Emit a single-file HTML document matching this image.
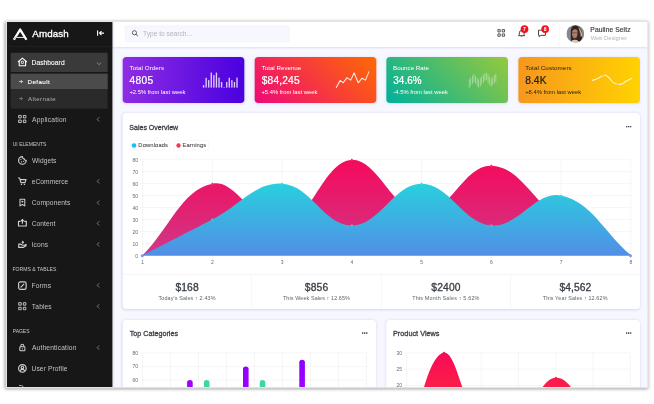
<!DOCTYPE html>
<html lang="en"><head><meta charset="utf-8"><title>Amdash - Dashboard</title>
<style>
html{font-size:3px}
html,body{margin:0;padding:0;width:654px;height:404px;overflow:hidden;background:#fff}
body{font-family:"Liberation Sans","DejaVu Sans",sans-serif}
#stage{position:absolute;left:0;top:0;width:654rem;height:404rem;transform:scale(0.333333);transform-origin:0 0}
#win{position:absolute;left:7rem;top:22rem;width:640.2rem;height:365rem;overflow:hidden;background:#f7f7ff;box-shadow:0 0 0 1.300rem #e4e4e4,-.6rem 1.200rem 3.200rem 1.300rem rgba(0,0,0,.45)}
#o{filter:blur(.5rem);position:absolute;left:-7rem;top:-22rem;width:654rem;height:404rem}
#o *{position:absolute;box-sizing:border-box;white-space:nowrap}
#side{left:7rem;top:22rem;width:105.2rem;height:365rem;background:#171717;box-shadow:0 0 2.600rem rgba(0,0,0,.5)}
#shead{left:7rem;top:22rem;width:105.2rem;height:24.800rem;border-bottom:.4rem solid #303030}
.grp{left:10.800rem;width:97rem}
#top{left:112.2rem;top:22rem;width:535rem;height:25.200rem;background:#fff;box-shadow:0 .3rem 1.200rem rgba(140,140,230,.4)}
#search{left:125rem;top:25.600rem;width:164.600rem;height:16.300rem;background:#f7f7ff;border:.4rem solid #ececf8;border-radius:1.500rem}
.badge{width:7.700rem;height:7.700rem;border-radius:50%;background:#f5101f;color:#fff;font-size:5rem;line-height:7.700rem;text-align:center;font-weight:700}
.card{top:56.900rem;width:121.700rem;height:46rem;border-radius:3.800rem;box-shadow:0 .8rem 2.500rem rgba(140,140,220,.25)}
.c1{background:linear-gradient(to right,#8e2de2,#4a00e0)}
.c2{background:linear-gradient(45deg,#ee0979,#ff6a00)}
.c3{background:linear-gradient(45deg,#00b09b,#96c93d)}
.c4{background:linear-gradient(to right,#f7971e,#ffd200)}
.panel{background:#fff;border-radius:3.800rem;box-shadow:0 .9rem 2.500rem rgba(140,140,225,.32)}
.lg{height:10.100rem;top:140.300rem;border:.4rem solid #ebebf2;border-radius:1.500rem;background:#fff}
.dot{width:4.400rem;height:4.400rem;border-radius:50%;top:143.300rem}
svg text{font-family:"Liberation Sans",sans-serif;font-size:5px;fill:#6a6a6a}
svg.ch{left:0;top:0;width:654rem;height:404rem}
svg.ch line{stroke:#e9e9e9;stroke-width:.42}
.vl{top:274.500rem;width:.4rem;height:34.500rem;background:#e6e6ee}
</style></head>
<body><div id="stage"><div id="win"><div id="o">

<div id="top"></div>
<div id="side"></div>
<div id="shead"></div>
<svg style="left:10rem;top:24rem;width:22rem;height:20rem" viewBox="0 0 444 404"><path d="M78 318 205 112 332 318" fill="none" stroke="#fff" stroke-width="47" stroke-linejoin="round" stroke-linecap="butt"/><path d="M110 271H288" fill="none" stroke="#fff" stroke-width="19"/><path d="M88 292 150 258" fill="none" stroke="#171717" stroke-width="7"/></svg>
<div style="left:32.26rem;top:27.72rem;font-size:9.8rem;line-height:11.76rem;color:#fff;letter-spacing:0.096rem;-webkit-text-stroke:0.32rem #fff;">Amdash</div>
<svg style="left:97rem;top:30.400rem;width:7rem;height:5.500rem" viewBox="0 0 14 11"><path d="M1.200 0v11" stroke="#fff" stroke-width="2.200" fill="none"/><path d="M14 5.500H5.500M9 1.500 5 5.500l4 4" stroke="#fff" stroke-width="2.200" fill="none"/></svg>

<div class="grp" style="top:52.800rem;height:19.100rem;background:#3a3a3a;border-radius:1.200rem 1.200rem 0 0"></div>
<div class="grp" style="top:73.800rem;height:34.900rem;background:#2a2a2a;border-radius:0 0 1.200rem 1.200rem"></div>
<div class="grp" style="top:73.800rem;height:15.300rem;background:#4b4b4b"></div>
<svg style="left:14rem;top:54rem;width:16rem;height:16rem" viewBox="0 0 404 404"><path d="M108 196 212 102 318 196M132 182V298H293V182" fill="none" stroke="#fff" stroke-width="27" stroke-linejoin="round" stroke-linecap="round"/><circle cx="212" cy="212" r="30" fill="none" stroke="#fff" stroke-width="25"/></svg>
<div style="left:31.52rem;top:58.59rem;font-size:6.67rem;line-height:8.00rem;color:#fff;letter-spacing:0.060rem;-webkit-text-stroke:0.1rem #fff;">Dashboard</div>
<svg style="left:96.1rem;top:60.7rem;width:6.00rem;height:6.00rem;color:#aaa" viewBox="0 0 8 8"><path d="M1.200 2.600 4 5.400l2.800-2.800" fill="none" stroke="currentColor" stroke-width="1"/></svg>
<svg style="left:18.5rem;top:79.3rem;width:4.50rem;height:4.50rem;color:#fff" viewBox="0 0 9 9"><path d="M0.500 4.500h7M4.500 1.500l3 3-3 3" fill="none" stroke="currentColor" stroke-width="1.400"/></svg>
<div style="left:27.45rem;top:78.38rem;font-size:6.25rem;line-height:7.50rem;color:#fff;letter-spacing:0.431rem;-webkit-text-stroke:0.1rem #fff;">Default</div>
<svg style="left:18.5rem;top:96.4rem;width:4.50rem;height:4.50rem;color:#8f8f8f" viewBox="0 0 9 9"><path d="M0.500 4.500h7M4.500 1.500l3 3-3 3" fill="none" stroke="currentColor" stroke-width="1.400"/></svg>
<div style="left:27.90rem;top:94.88rem;font-size:6.25rem;line-height:7.50rem;color:#adadad;letter-spacing:0.351rem;">Alternate</div>
<svg style="left:17.65rem;top:114.45rem;width:9.20rem;height:9.30rem;color:#d0d0d0" viewBox="0 0 24 24"><path d="M2.600 2.600h6.600v6.600H2.600zM14.800 2.600h6.600v6.600h-6.600zM2.600 14.800h6.600v6.600H2.600zM14.800 14.800h6.600v6.600h-6.600z" fill="none" stroke="currentColor" stroke-width="2.400" stroke-linejoin="round"/></svg><div style="left:32.00rem;top:115.69rem;font-size:6.67rem;line-height:8.00rem;color:#c2c2c2;letter-spacing:0.194rem;">Application</div><svg style="left:95.3rem;top:116.4rem;width:6.00rem;height:6.00rem;color:#9a9a9a" viewBox="0 0 8 8"><path d="M5.200 1.200 2.400 4l2.800 2.800" fill="none" stroke="currentColor" stroke-width="1"/></svg><div style="left:12.55rem;top:141.27rem;font-size:5.1rem;line-height:6.12rem;color:#c8c8c8;transform:scaleX(0.9922);transform-origin:0 0;">UI ELEMENTS</div><svg style="left:17.349999999999998rem;top:155.45rem;width:10.10rem;height:10.20rem;color:#d0d0d0" viewBox="0 0 24 24"><path d="M12 3a9 9 0 1 0 9 9 4 4 0 0 1-4.500-3.500A5 5 0 0 1 12 3z" fill="none" stroke="currentColor" stroke-width="2.800" stroke-linejoin="round"/><circle cx="8.500" cy="10" r="1.500" fill="currentColor"/><circle cx="10" cy="15.500" r="1.500" fill="currentColor"/><circle cx="15" cy="14" r="1.500" fill="currentColor"/></svg><div style="left:32.00rem;top:156.59rem;font-size:6.67rem;line-height:8.00rem;color:#c2c2c2;letter-spacing:0.051rem;">Widgets</div><svg style="left:17.65rem;top:176.54999999999998rem;width:9.60rem;height:9.50rem;color:#d0d0d0" viewBox="0 0 24 24"><path d="M2 3.500h3L8 15h10.500L21 7.500H6.500" fill="none" stroke="currentColor" stroke-width="2.800" stroke-linejoin="round" stroke-linecap="round"/><circle cx="9.500" cy="19.500" r="1.800" fill="currentColor"/><circle cx="17" cy="19.500" r="1.800" fill="currentColor"/></svg><div style="left:31.73rem;top:177.69rem;font-size:6.67rem;line-height:8.00rem;color:#c2c2c2;letter-spacing:0.036rem;">eCommerce</div><svg style="left:95.3rem;top:178.4rem;width:6.00rem;height:6.00rem;color:#9a9a9a" viewBox="0 0 8 8"><path d="M5.200 1.200 2.400 4l2.800 2.800" fill="none" stroke="currentColor" stroke-width="1"/></svg><svg style="left:18.05rem;top:197.54999999999998rem;width:8.80rem;height:9.90rem;color:#d0d0d0" viewBox="0 0 24 24"><path d="M5.500 3h13v18l-6.500-4-6.500 4z" fill="none" stroke="currentColor" stroke-width="2.800" stroke-linejoin="round"/><path d="M12 12.500 9.300 9.800a1.700 1.700 0 0 1 2.700-2 1.700 1.700 0 0 1 2.700 2z" fill="currentColor"/></svg><div style="left:31.67rem;top:198.89rem;font-size:6.67rem;line-height:8.00rem;color:#c2c2c2;letter-spacing:0.102rem;">Components</div><svg style="left:95.3rem;top:199.6rem;width:6.00rem;height:6.00rem;color:#9a9a9a" viewBox="0 0 8 8"><path d="M5.200 1.200 2.400 4l2.800 2.800" fill="none" stroke="currentColor" stroke-width="1"/></svg><svg style="left:17.349999999999998rem;top:218.04999999999998rem;width:10.10rem;height:9.90rem;color:#d0d0d0" viewBox="0 0 24 24"><path d="M7.500 8H2.500v11.500h19V8H16.500" fill="none" stroke="currentColor" stroke-width="2.800" stroke-linejoin="round"/><path d="M12 14V4.500M8.800 7.200 12 4l3.200 3.200" fill="none" stroke="currentColor" stroke-width="2.800"/></svg><div style="left:31.67rem;top:219.69rem;font-size:6.67rem;line-height:8.00rem;color:#c2c2c2;letter-spacing:0.043rem;">Content</div><svg style="left:95.3rem;top:220.4rem;width:6.00rem;height:6.00rem;color:#9a9a9a" viewBox="0 0 8 8"><path d="M5.200 1.200 2.400 4l2.800 2.800" fill="none" stroke="currentColor" stroke-width="1"/></svg><svg style="left:17.349999999999998rem;top:239.25rem;width:10.10rem;height:9.70rem;color:#d0d0d0" viewBox="0 0 24 24"><path d="M3 12h5l4 2.500h5l4-2v3.500l-7 4H3z" fill="none" stroke="currentColor" stroke-width="2.800" stroke-linejoin="round"/><path d="M13 3c2 2.300 2.800 3.600 2.800 5a2.800 2.800 0 0 1-5.600 0C10.200 6.600 11 5.300 13 3z" fill="currentColor"/></svg><div style="left:31.40rem;top:240.59rem;font-size:6.67rem;line-height:8.00rem;color:#c2c2c2;letter-spacing:0.215rem;">Icons</div><svg style="left:95.3rem;top:241.3rem;width:6.00rem;height:6.00rem;color:#9a9a9a" viewBox="0 0 8 8"><path d="M5.200 1.200 2.400 4l2.800 2.800" fill="none" stroke="currentColor" stroke-width="1"/></svg><div style="left:12.49rem;top:265.97rem;font-size:5.1rem;line-height:6.12rem;color:#c8c8c8;letter-spacing:0.005rem;">FORMS &amp; TABLES</div><svg style="left:17.349999999999998rem;top:280.55rem;width:10.10rem;height:10.00rem;color:#d0d0d0" viewBox="0 0 24 24"><rect x="3" y="3" width="18" height="18" rx="4" fill="none" stroke="currentColor" stroke-width="2.800"/><path d="M8.500 15.500 15.500 8.500" stroke="currentColor" stroke-width="2.800" stroke-linecap="round"/></svg><div style="left:31.47rem;top:281.49rem;font-size:6.67rem;line-height:8.00rem;color:#c2c2c2;letter-spacing:0.184rem;">Forms</div><svg style="left:95.3rem;top:282.2rem;width:6.00rem;height:6.00rem;color:#9a9a9a" viewBox="0 0 8 8"><path d="M5.200 1.200 2.400 4l2.800 2.800" fill="none" stroke="currentColor" stroke-width="1"/></svg><svg style="left:17.65rem;top:301.65rem;width:9.20rem;height:9.10rem;color:#d0d0d0" viewBox="0 0 24 24"><path d="M2.600 2.600h6.600v6.600H2.600zM14.800 2.600h6.600v6.600h-6.600zM2.600 14.800h6.600v6.600H2.600zM14.800 14.800h6.600v6.600h-6.600z" fill="none" stroke="currentColor" stroke-width="2.400" stroke-linejoin="round"/></svg><div style="left:31.87rem;top:302.59rem;font-size:6.67rem;line-height:8.00rem;color:#c2c2c2;letter-spacing:0.111rem;">Tables</div><svg style="left:95.3rem;top:303.29999999999995rem;width:6.00rem;height:6.00rem;color:#9a9a9a" viewBox="0 0 8 8"><path d="M5.200 1.200 2.400 4l2.800 2.800" fill="none" stroke="currentColor" stroke-width="1"/></svg><div style="left:12.50rem;top:328.27rem;font-size:5.1rem;line-height:6.12rem;color:#c8c8c8;transform:scaleX(0.9820);transform-origin:0 0;">PAGES</div><svg style="left:18.05rem;top:342.45rem;width:8.70rem;height:10.30rem;color:#d0d0d0" viewBox="0 0 24 24"><rect x="5" y="10" width="14" height="11" rx="1.500" fill="none" stroke="currentColor" stroke-width="2.800"/><path d="M8 10V7a4 4 0 0 1 8 0v3" fill="none" stroke="currentColor" stroke-width="2.800"/><path d="M12 14v3.500" stroke="currentColor" stroke-width="2.400"/></svg><div style="left:32.00rem;top:343.79rem;font-size:6.67rem;line-height:8.00rem;color:#c2c2c2;letter-spacing:0.162rem;">Authentication</div><svg style="left:95.3rem;top:344.5rem;width:6.00rem;height:6.00rem;color:#9a9a9a" viewBox="0 0 8 8"><path d="M5.200 1.200 2.400 4l2.800 2.800" fill="none" stroke="currentColor" stroke-width="1"/></svg><svg style="left:17.349999999999998rem;top:363.45rem;width:10.10rem;height:10.10rem;color:#d0d0d0" viewBox="0 0 24 24"><circle cx="12" cy="12" r="9" fill="none" stroke="currentColor" stroke-width="2.800"/><circle cx="12" cy="10" r="3" fill="none" stroke="currentColor" stroke-width="2.800"/><path d="M6.500 18.500c1-3 3-4 5.500-4s4.500 1 5.500 4" fill="none" stroke="currentColor" stroke-width="2.800"/></svg><div style="left:31.53rem;top:364.79rem;font-size:6.67rem;line-height:8.00rem;color:#c2c2c2;letter-spacing:0.097rem;">User Profile</div><svg class="ch" viewBox="0 0 654 404"><path d="M19 385.500H21.700Q23.100 385.600 23.100 387.500" fill="none" stroke="#b5b5b5" stroke-width=".9"/></svg>

<div id="search"></div>
<svg style="left:131.700rem;top:30rem;width:6.700rem;height:6.700rem" viewBox="0 0 14 14"><circle cx="5.800" cy="5.800" r="4.400" fill="none" stroke="#4a4a4a" stroke-width="1.800"/><path d="M9 9l4 4" stroke="#4a4a4a" stroke-width="2" stroke-linecap="round"/></svg>
<div style="left:143.07rem;top:29.74rem;font-size:6.67rem;line-height:8.00rem;color:#b4b4bd;transform:scaleX(0.9940);transform-origin:0 0;">Type to search...</div>
<svg style="left:497.1rem;top:28.8rem;width:8.50rem;height:8.50rem;color:#3c3c3c" viewBox="0 0 24 24"><path d="M2.600 2.600h6.600v6.600H2.600zM14.800 2.600h6.600v6.600h-6.600zM2.600 14.800h6.600v6.600H2.600zM14.800 14.800h6.600v6.600h-6.600z" fill="none" stroke="currentColor" stroke-width="2.400" stroke-linejoin="round"/></svg>
<svg style="left:517.600rem;top:29.300rem;width:8rem;height:8rem" viewBox="0 0 16 16"><path d="M3.200 11V7.200a4.800 4.800 0 0 1 9.600 0V11l1.500 1.700H1.700z" fill="none" stroke="#3c3c3c" stroke-width="1.900" stroke-linejoin="round"/><path d="M6.200 14.300a1.900 1.900 0 0 0 3.600 0z" fill="#3c3c3c"/></svg>
<div class="badge" style="left:520.600rem;top:25.400rem">7</div>
<svg style="left:537.700rem;top:29.200rem;width:8.600rem;height:8.100rem" viewBox="0 0 17 16"><path d="M1.600 1.600h13.800v10.300H6.300L3.300 14.800V11.900H1.600z" fill="none" stroke="#3c3c3c" stroke-width="1.900" stroke-linejoin="round"/></svg>
<div class="badge" style="left:541.300rem;top:25.200rem">8</div>
<div style="left:559.400rem;top:22rem;width:.4rem;height:25rem;background:#eeeef4"></div>
<svg style="left:566.300rem;top:24.850rem;width:17.800rem;height:17.700rem" viewBox="0 0 300 298"><defs><clipPath id="av"><ellipse cx="150" cy="149" rx="150" ry="149"/></clipPath></defs><g clip-path="url(#av)"><rect width="300" height="298" fill="#84888f"/><path d="M150 8C100 10 70 60 76 130c4 40-8 90 6 150l140 18c36-30 50-90 44-150C262 70 214 6 150 8z" fill="#33221f"/><path d="M100 112c8-44 64-52 86-18 10 30 4 82-14 112-12 22-46 24-60 4-16-26-18-68-12-98z" fill="#b07f6d"/><path d="M112 150c10 40 30 60 66 50-8 24-50 30-62 6-6-16-6-36-4-56z" fill="#9c6c5c"/><path d="M98 132h92" stroke="#4a3431" stroke-width="10"/><path d="M198 38c40 14 68 80 72 150l-30 4c-2-40-14-110-42-154z" fill="#d2ae92"/><path d="M226 110c14 30 18 60 18 84l-16 2c2-30-2-60-2-86z" fill="#7a5a48"/><path d="M70 298c10-40 46-52 84-48 34 4 56 22 66 48z" fill="#e4c0ae"/></g></svg>
<div style="left:590.36rem;top:25.49rem;font-size:6.67rem;line-height:8.00rem;color:#404040;letter-spacing:0.099rem;-webkit-text-stroke:0.18rem #404040;">Pauline Seitz</div>
<div style="left:590.80rem;top:34.78rem;font-size:5.83rem;line-height:7.00rem;color:#b3b3b3;transform:scaleX(0.9903);transform-origin:0 0;">Web Designer</div>

<div class="card c1" style="left:122.5rem"></div><div style="left:129.53rem;top:64.13rem;font-size:6.25rem;line-height:7.50rem;color:#fff;letter-spacing:0.048rem;">Total Orders</div><div style="left:129.57rem;top:74.25rem;font-size:10.2rem;line-height:12.24rem;color:#fff;letter-spacing:0.281rem;-webkit-text-stroke:0.24rem #fff;">4805</div><div style="left:129.42rem;top:88.38rem;font-size:5.83rem;line-height:7.00rem;color:#fff;letter-spacing:0.002rem;">+2.5% from last week</div><svg class="ch" viewBox="0 0 654 404"><rect x="202.90" y="85.10" width="1.350" height="2.5" fill="#fff" opacity=".8"/><rect x="205.47" y="77.80" width="1.350" height="9.8" fill="#fff" opacity=".8"/><rect x="208.04" y="80.10" width="1.350" height="7.5" fill="#fff" opacity=".8"/><rect x="210.62" y="72.60" width="1.350" height="15" fill="#fff" opacity=".8"/><rect x="213.19" y="75.10" width="1.350" height="12.5" fill="#fff" opacity=".8"/><rect x="215.76" y="72.60" width="1.350" height="15" fill="#fff" opacity=".8"/><rect x="218.33" y="77.60" width="1.350" height="10" fill="#fff" opacity=".8"/><rect x="220.90" y="82.00" width="1.350" height="5.6" fill="#fff" opacity=".8"/><rect x="223.48" y="87.00" width="1.350" height="0.6" fill="#fff" opacity=".8"/><rect x="226.05" y="82.00" width="1.350" height="5.6" fill="#fff" opacity=".8"/><rect x="228.62" y="77.80" width="1.350" height="9.8" fill="#fff" opacity=".8"/><rect x="231.19" y="80.10" width="1.350" height="7.5" fill="#fff" opacity=".8"/><rect x="233.76" y="82.00" width="1.350" height="5.6" fill="#fff" opacity=".8"/><rect x="236.34" y="77.60" width="1.350" height="10" fill="#fff" opacity=".8"/></svg>
<div class="card c2" style="left:254.5rem"></div><div style="left:261.53rem;top:64.13rem;font-size:6.25rem;line-height:7.50rem;color:#fff;transform:scaleX(0.9910);transform-origin:0 0;">Total Revenue</div><div style="left:261.67rem;top:74.25rem;font-size:10.2rem;line-height:12.24rem;color:#fff;letter-spacing:0.185rem;-webkit-text-stroke:0.24rem #fff;">$84,245</div><div style="left:261.42rem;top:88.38rem;font-size:5.83rem;line-height:7.00rem;color:#fff;letter-spacing:0.002rem;">+5.4% from last week</div><svg class="ch" viewBox="0 0 654 404"><path d="M336.3 87.6 L340.1 80.45 L343.2 82.8 L347 77.6 L350.7 80.1 L354.1 72.9 L358.2 82.8 L362 78.2 L365.4 80.1 L368.9 71.9" fill="none" stroke="#fff" stroke-opacity=".9" stroke-width="1.050" stroke-linejoin="round" stroke-linecap="round"/></svg>
<div class="card c3" style="left:386.4rem"></div><div style="left:393.05rem;top:64.13rem;font-size:6.25rem;line-height:7.50rem;color:#fff;transform:scaleX(0.9955);transform-origin:0 0;">Bounce Rate</div><div style="left:393.37rem;top:74.25rem;font-size:10.2rem;line-height:12.24rem;color:#fff;transform:scaleX(0.9752);transform-origin:0 0;-webkit-text-stroke:0.24rem #fff;">34.6%</div><div style="left:393.32rem;top:88.38rem;font-size:5.83rem;line-height:7.00rem;color:#fff;letter-spacing:0.005rem;">-4.5% from last week</div><svg class="ch" viewBox="0 0 654 404"><rect x="468.90" y="79.45" width=".600" height="8.40" fill="#fff" opacity=".6"/><rect x="470.47" y="77.57" width=".600" height="8.15" fill="#fff" opacity=".6"/><rect x="472.04" y="75.69" width=".600" height="8.15" fill="#fff" opacity=".6"/><rect x="473.61" y="74.06" width=".600" height="7.90" fill="#fff" opacity=".6"/><rect x="475.18" y="75.69" width=".600" height="7.52" fill="#fff" opacity=".6"/><rect x="476.75" y="77.57" width=".600" height="8.15" fill="#fff" opacity=".6"/><rect x="478.33" y="79.45" width=".600" height="8.15" fill="#fff" opacity=".6"/><rect x="479.90" y="78.19" width=".600" height="8.15" fill="#fff" opacity=".6"/><rect x="481.47" y="76.31" width=".600" height="8.15" fill="#fff" opacity=".6"/><rect x="483.04" y="74.43" width=".600" height="7.90" fill="#fff" opacity=".6"/><rect x="484.61" y="73.18" width=".600" height="7.52" fill="#fff" opacity=".6"/><rect x="486.18" y="72.55" width=".600" height="7.52" fill="#fff" opacity=".6"/><rect x="487.75" y="74.43" width=".600" height="8.15" fill="#fff" opacity=".6"/><rect x="489.32" y="76.94" width=".600" height="8.15" fill="#fff" opacity=".6"/><rect x="490.89" y="78.82" width=".600" height="7.77" fill="#fff" opacity=".6"/><rect x="492.46" y="77.32" width=".600" height="7.77" fill="#fff" opacity=".6"/><rect x="494.04" y="75.06" width=".600" height="8.15" fill="#fff" opacity=".6"/><rect x="495.61" y="74.06" width=".600" height="7.52" fill="#fff" opacity=".6"/></svg>
<div class="card c4" style="left:518.3rem"></div><div style="left:525.32rem;top:64.13rem;font-size:6.25rem;line-height:7.50rem;color:#222;letter-spacing:0.086rem;">Total Customers</div><div style="left:525.16rem;top:74.25rem;font-size:10.2rem;line-height:12.24rem;color:#222;letter-spacing:0.102rem;-webkit-text-stroke:0.24rem #222;">8.4K</div><div style="left:525.22rem;top:88.38rem;font-size:5.83rem;line-height:7.00rem;color:#222;letter-spacing:0.002rem;">+8.4% from last week</div><svg class="ch" viewBox="0 0 654 404"><path d="M592.30 80.45 C593.98 79.87 595.48 79.52 597.10 78.80 C598.91 78.00 600.30 76.92 602.10 76.10 C603.13 75.63 604.19 74.91 605.20 75.10 C606.40 75.33 607.40 76.39 608.40 77.30 C610.27 79.01 611.42 81.08 613.40 82.60 C614.57 83.50 615.95 83.93 617.40 84.20 C618.78 84.46 620.19 84.55 621.50 84.10 C623.17 83.53 624.32 82.21 625.90 81.30 C627.92 80.14 629.74 79.28 631.80 78.20" fill="none" stroke="#fff3c4" stroke-width="1.150" stroke-linecap="round"/><circle cx="603.2" cy="75.3" r=".6" fill="#fb9a2a"/><circle cx="617.6" cy="84.2" r=".6" fill="#fb9a2a"/></svg>

<div class="panel" style="left:122.500rem;top:113rem;width:517.500rem;height:196rem"></div>
<div style="left:129.27rem;top:123.11rem;font-size:7.6rem;line-height:9.12rem;color:#383e44;transform:scaleX(0.9252);transform-origin:0 0;-webkit-text-stroke:0.3rem #383e44;">Sales Overview</div>
<svg style="left:625.5rem;top:125.6rem;width:6.20rem;height:2.10rem;color:#333" viewBox="0 0 6 2"><circle cx="1" cy="1" r=".8" fill="currentColor"/><circle cx="3" cy="1" r=".8" fill="currentColor"/><circle cx="5" cy="1" r=".8" fill="currentColor"/></svg>
<div class="lg" style="left:129.800rem;width:40rem"></div><div class="dot" style="left:131.800rem;background:#17c1f3"></div>
<div style="left:138.37rem;top:141.83rem;font-size:5.83rem;line-height:7.00rem;color:#4a4a4a;letter-spacing:0.102rem;-webkit-text-stroke:0.08rem #4a4a4a;">Downloads</div>
<div class="lg" style="left:173.500rem;width:35.100rem"></div><div class="dot" style="left:176.200rem;background:#fb3552"></div>
<div style="left:182.47rem;top:141.83rem;font-size:5.83rem;line-height:7.00rem;color:#4a4a4a;letter-spacing:0.107rem;-webkit-text-stroke:0.08rem #4a4a4a;">Earnings</div>
<svg class="ch" viewBox="0 0 654 404">
<defs>
<linearGradient id="ge" gradientUnits="userSpaceOnUse" x1="0" y1="155" x2="0" y2="300"><stop offset="0" stop-color="#f80759"/><stop offset="1" stop-color="#bc4e9c"/></linearGradient>
<linearGradient id="gd" gradientUnits="userSpaceOnUse" x1="0" y1="155" x2="0" y2="280"><stop offset="0" stop-color="#17ead9"/><stop offset="1" stop-color="#6078ea"/></linearGradient>
<linearGradient id="gp" gradientUnits="userSpaceOnUse" x1="0" y1="345" x2="0" y2="470"><stop offset="0" stop-color="#7f00ff"/><stop offset="1" stop-color="#e100ff"/></linearGradient>
<linearGradient id="gg" gradientUnits="userSpaceOnUse" x1="0" y1="345" x2="0" y2="470"><stop offset="0" stop-color="#42e695"/><stop offset="1" stop-color="#3bb2b8"/></linearGradient>
<linearGradient id="gv" gradientUnits="userSpaceOnUse" x1="0" y1="345" x2="0" y2="470"><stop offset="0" stop-color="#f80759"/><stop offset="1" stop-color="#ff4b2b"/></linearGradient>
</defs>
<g><line x1="139.6" y1="255.35" x2="630.85" y2="255.35"/><line x1="139.6" y1="243.40" x2="630.85" y2="243.40"/><line x1="139.6" y1="231.45" x2="630.85" y2="231.45"/><line x1="139.6" y1="219.50" x2="630.85" y2="219.50"/><line x1="139.6" y1="207.55" x2="630.85" y2="207.55"/><line x1="139.6" y1="195.60" x2="630.85" y2="195.60"/><line x1="139.6" y1="183.65" x2="630.85" y2="183.65"/><line x1="139.6" y1="171.70" x2="630.85" y2="171.70"/><line x1="139.6" y1="159.75" x2="630.85" y2="159.75"/><line x1="142.60" y1="159.75" x2="142.60" y2="257.85"/><line x1="212.35" y1="159.75" x2="212.35" y2="257.85"/><line x1="282.10" y1="159.75" x2="282.10" y2="257.85"/><line x1="351.85" y1="159.75" x2="351.85" y2="257.85"/><line x1="421.60" y1="159.75" x2="421.60" y2="257.85"/><line x1="491.35" y1="159.75" x2="491.35" y2="257.85"/><line x1="561.10" y1="159.75" x2="561.10" y2="257.85"/><line x1="630.85" y1="159.75" x2="630.85" y2="257.85"/></g>
<path d="M142.60 255.35 C170.50 226.67 181.57 190.24 212.35 183.65 C237.37 178.29 256.48 229.86 282.10 225.47 C312.28 220.30 322.77 162.24 351.85 159.75 C378.57 159.75 393.13 212.31 421.60 213.52 C448.93 214.70 464.02 164.55 491.35 165.72 C519.82 166.94 531.58 200.54 561.10 219.50 C587.38 236.39 602.95 241.01 630.85 255.35 L630.85 255.05 L142.60 255.05 Z" fill="url(#ge)"/>
<circle cx="212.35" cy="183.65" r=".95" fill="url(#ge)" stroke="#ffb3cf" stroke-opacity=".55" stroke-width=".35"/><circle cx="282.10" cy="225.47" r=".95" fill="url(#ge)" stroke="#ffb3cf" stroke-opacity=".55" stroke-width=".35"/><circle cx="351.85" cy="159.75" r=".95" fill="url(#ge)" stroke="#ffb3cf" stroke-opacity=".55" stroke-width=".35"/><circle cx="421.60" cy="213.52" r=".95" fill="url(#ge)" stroke="#ffb3cf" stroke-opacity=".55" stroke-width=".35"/><circle cx="491.35" cy="165.72" r=".95" fill="url(#ge)" stroke="#ffb3cf" stroke-opacity=".55" stroke-width=".35"/><circle cx="561.10" cy="219.50" r=".95" fill="url(#ge)" stroke="#ffb3cf" stroke-opacity=".55" stroke-width=".35"/>
<path d="M142.60 255.35 C170.50 241.01 184.45 233.84 212.35 219.50 C240.25 205.16 254.71 182.48 282.10 183.65 C310.51 184.87 323.95 225.47 351.85 225.47 C379.75 225.47 393.70 183.65 421.60 183.65 C449.50 183.65 462.48 223.00 491.35 225.47 C518.28 227.78 535.86 190.19 561.10 195.60 C591.66 202.14 602.95 231.45 630.85 255.35 L630.85 255.80 L142.60 255.80 Z" fill="url(#gd)"/>
<circle cx="212.35" cy="219.50" r=".95" fill="url(#gd)" stroke="#b5f0f7" stroke-opacity=".55" stroke-width=".35"/><circle cx="282.10" cy="183.65" r=".95" fill="url(#gd)" stroke="#b5f0f7" stroke-opacity=".55" stroke-width=".35"/><circle cx="351.85" cy="225.47" r=".95" fill="url(#gd)" stroke="#b5f0f7" stroke-opacity=".55" stroke-width=".35"/><circle cx="421.60" cy="183.65" r=".95" fill="url(#gd)" stroke="#b5f0f7" stroke-opacity=".55" stroke-width=".35"/><circle cx="491.35" cy="225.47" r=".95" fill="url(#gd)" stroke="#b5f0f7" stroke-opacity=".55" stroke-width=".35"/><circle cx="561.10" cy="195.60" r=".95" fill="url(#gd)" stroke="#b5f0f7" stroke-opacity=".55" stroke-width=".35"/>
<circle cx="142.30" cy="255.80" r="1.150" fill="#8fb4f3" stroke="#4f83e2" stroke-width=".7"/><circle cx="630.55" cy="255.80" r="1.150" fill="#8fb4f3" stroke="#4f83e2" stroke-width=".7"/>
<g><text x="138.0" y="161.95" text-anchor="end">80</text><text x="138.0" y="173.90" text-anchor="end">70</text><text x="138.0" y="185.85" text-anchor="end">60</text><text x="138.0" y="197.80" text-anchor="end">50</text><text x="138.0" y="209.75" text-anchor="end">40</text><text x="138.0" y="221.70" text-anchor="end">30</text><text x="138.0" y="233.65" text-anchor="end">20</text><text x="138.0" y="245.60" text-anchor="end">10</text><text x="138.0" y="257.55" text-anchor="end">0</text><text x="142.60" y="264" text-anchor="middle">1</text><text x="212.35" y="264" text-anchor="middle">2</text><text x="282.10" y="264" text-anchor="middle">3</text><text x="351.85" y="264" text-anchor="middle">4</text><text x="421.60" y="264" text-anchor="middle">5</text><text x="491.35" y="264" text-anchor="middle">6</text><text x="561.10" y="264" text-anchor="middle">7</text><text x="630.85" y="264" text-anchor="middle">8</text></g>
</svg>
<div style="left:122.500rem;top:274.100rem;width:517.500rem;height:.4rem;background:#e6e6ee"></div>
<div class="vl" style="left:251.700rem"></div><div class="vl" style="left:381.100rem"></div><div class="vl" style="left:510.500rem"></div>
<div style="left:175.56rem;top:280.95rem;font-size:10.3rem;line-height:12.36rem;color:#3a3f45;letter-spacing:0.047rem;-webkit-text-stroke:0.32rem #3a3f45;">$168</div><div style="left:158.39rem;top:294.97rem;font-size:5.42rem;line-height:6.50rem;color:#5f6368;letter-spacing:0.140rem;">Today's Sales ↑ 2.43%</div>
<div style="left:304.81rem;top:280.95rem;font-size:10.3rem;line-height:12.36rem;color:#3a3f45;letter-spacing:0.181rem;-webkit-text-stroke:0.32rem #3a3f45;">$856</div><div style="left:282.89rem;top:294.97rem;font-size:5.42rem;line-height:6.50rem;color:#5f6368;letter-spacing:0.104rem;">This Week Sales ↑ 12.65%</div>
<div style="left:431.36rem;top:280.95rem;font-size:10.3rem;line-height:12.36rem;color:#3a3f45;letter-spacing:0.128rem;-webkit-text-stroke:0.32rem #3a3f45;">$2400</div><div style="left:412.19rem;top:294.97rem;font-size:5.42rem;line-height:6.50rem;color:#5f6368;letter-spacing:0.187rem;">This Month Sales ↑ 5.62%</div>
<div style="left:559.51rem;top:280.95rem;font-size:10.3rem;line-height:12.36rem;color:#3a3f45;letter-spacing:0.051rem;-webkit-text-stroke:0.32rem #3a3f45;">$4,562</div><div style="left:542.84rem;top:294.97rem;font-size:5.42rem;line-height:6.50rem;color:#5f6368;letter-spacing:0.126rem;">This Year Sales ↑ 12.62%</div>

<div class="panel" style="left:122.500rem;top:320.150rem;width:253.500rem;height:90rem"></div>
<div style="left:129.66rem;top:329.11rem;font-size:7.6rem;line-height:9.12rem;color:#383e44;transform:scaleX(0.9454);transform-origin:0 0;-webkit-text-stroke:0.3rem #383e44;">Top Categories</div>
<svg style="left:361.7rem;top:332.1rem;width:6.20rem;height:2.10rem;color:#333" viewBox="0 0 6 2"><circle cx="1" cy="1" r=".8" fill="currentColor"/><circle cx="3" cy="1" r=".8" fill="currentColor"/><circle cx="5" cy="1" r=".8" fill="currentColor"/></svg>
<div class="panel" style="left:386.400rem;top:320.150rem;width:253.600rem;height:90rem"></div>
<div style="left:392.97rem;top:329.11rem;font-size:7.6rem;line-height:9.12rem;color:#383e44;transform:scaleX(0.9603);transform-origin:0 0;-webkit-text-stroke:0.3rem #383e44;">Product Views</div>
<svg style="left:625.5rem;top:332.1rem;width:6.20rem;height:2.10rem;color:#333" viewBox="0 0 6 2"><circle cx="1" cy="1" r=".8" fill="currentColor"/><circle cx="3" cy="1" r=".8" fill="currentColor"/><circle cx="5" cy="1" r=".8" fill="currentColor"/></svg>
<svg class="ch" viewBox="0 0 654 404">
<g><line x1="139.6" y1="352.80" x2="366.60" y2="352.80"/><line x1="139.6" y1="366.45" x2="366.60" y2="366.45"/><line x1="139.6" y1="380.10" x2="366.60" y2="380.10"/><line x1="139.6" y1="393.75" x2="366.60" y2="393.75"/><line x1="142.60" y1="352.80" x2="142.60" y2="400"/><line x1="170.60" y1="352.80" x2="170.60" y2="400"/><line x1="198.60" y1="352.80" x2="198.60" y2="400"/><line x1="226.60" y1="352.80" x2="226.60" y2="400"/><line x1="254.60" y1="352.80" x2="254.60" y2="400"/><line x1="282.60" y1="352.80" x2="282.60" y2="400"/><line x1="310.60" y1="352.80" x2="310.60" y2="400"/><line x1="338.60" y1="352.80" x2="338.60" y2="400"/><line x1="366.60" y1="352.80" x2="366.60" y2="400"/><line x1="403.6" y1="352.80" x2="630.40" y2="352.80"/><line x1="403.6" y1="369.10" x2="630.40" y2="369.10"/><line x1="403.6" y1="385.40" x2="630.40" y2="385.40"/><line x1="403.6" y1="401.70" x2="630.40" y2="401.70"/><line x1="406.60" y1="352.80" x2="406.60" y2="400"/><line x1="443.90" y1="352.80" x2="443.90" y2="400"/><line x1="481.20" y1="352.80" x2="481.20" y2="400"/><line x1="518.50" y1="352.80" x2="518.50" y2="400"/><line x1="555.80" y1="352.80" x2="555.80" y2="400"/><line x1="593.10" y1="352.80" x2="593.10" y2="400"/><line x1="630.40" y1="352.80" x2="630.40" y2="400"/></g>
<path d="M187.10 400V382.70a2.800 2.600 0 0 1 5.6 0V400z" fill="url(#gp)"/><path d="M203.90 400V382.70a2.800 2.600 0 0 1 5.6 0V400z" fill="url(#gg)"/><path d="M243.00 400V369.05a2.800 2.600 0 0 1 5.6 0V400z" fill="url(#gp)"/><path d="M259.75 400V382.70a2.800 2.600 0 0 1 5.6 0V400z" fill="url(#gg)"/><path d="M299.30 400V362.23a2.800 2.600 0 0 1 5.6 0V400z" fill="url(#gp)"/>
<path d="M406.60 440.62 C421.52 405.41 427.46 356.91 443.90 352.60 C457.30 352.60 461.04 403.44 481.20 421.06 C490.88 429.52 506.38 424.84 518.50 417.80 C536.22 407.50 540.55 378.37 555.80 377.70 C570.39 377.06 577.13 401.07 593.10 414.54 C606.97 426.24 615.48 430.19 630.40 440.62 L630.40 450.40 L406.60 450.40 Z" fill="url(#gv)"/>
<circle cx="443.90" cy="352.60" r=".95" fill="url(#gv)"/><circle cx="555.80" cy="377.70" r=".95" fill="url(#gv)"/>
<g><text x="138.0" y="354.55" text-anchor="end">80</text><text x="138.0" y="368.20" text-anchor="end">70</text><text x="138.0" y="381.85" text-anchor="end">60</text><text x="402.0" y="354.55" text-anchor="end">30</text><text x="402.0" y="370.85" text-anchor="end">25</text><text x="402.0" y="387.15" text-anchor="end">20</text></g>
</svg>

</div></div></div></body></html>
